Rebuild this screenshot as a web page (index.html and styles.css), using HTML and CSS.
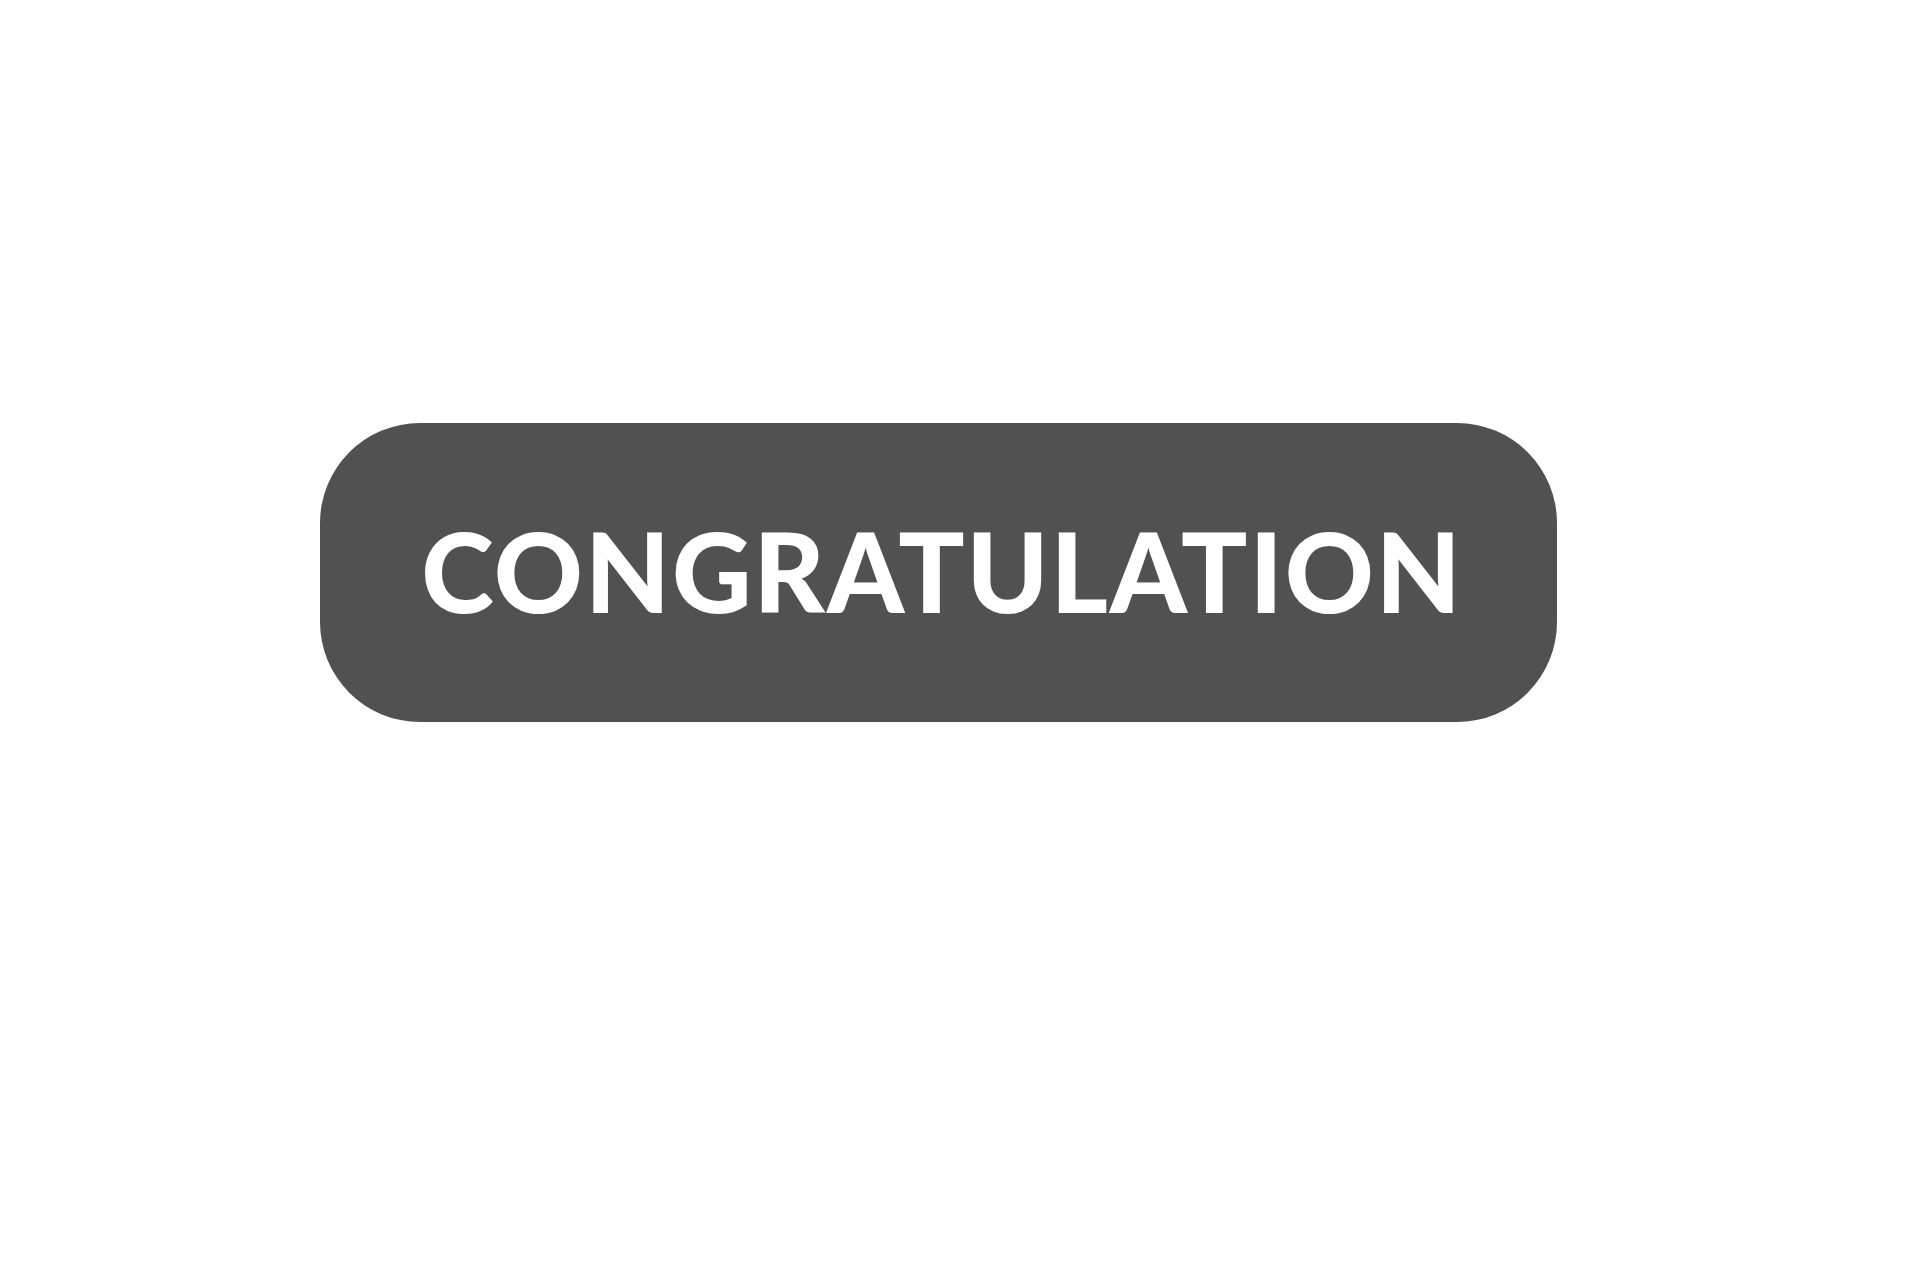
FILE: index.html
```html
<!DOCTYPE html>
<html lang="en">
<head>
<meta charset="utf-8">
<title>Congratulation</title>
<link rel="stylesheet" href="styles.css">
</head>
<body>
<main class="stage">
  <div class="banner">
    <span class="banner-text">CONGRATULATION</span>
  </div>
</main>
</body>
</html>
```

FILE: styles.css
```css
html, body {
  margin: 0;
  padding: 0;
  background: #ffffff;
}

.stage {
  width: 1920px;
  height: 1280px;
  display: flex;
  align-items: flex-start;
  justify-content: flex-start;
  padding: 423px 0 0 320px;
  box-sizing: border-box;
}

.banner {
  width: 1237px;
  height: 299px;
  border-radius: 100px;
  background: #505150;
  display: flex;
  align-items: center;
  justify-content: center;
  padding-bottom: 6px;
  padding-left: 7px;
  box-sizing: border-box;
}

.banner-text {
  font-family: "Lato", "Liberation Sans", sans-serif;
  font-weight: 900;
  font-size: 110px;
  line-height: 1;
  color: #ffffff;
  letter-spacing: 1.9px;
  white-space: nowrap;
}
```
